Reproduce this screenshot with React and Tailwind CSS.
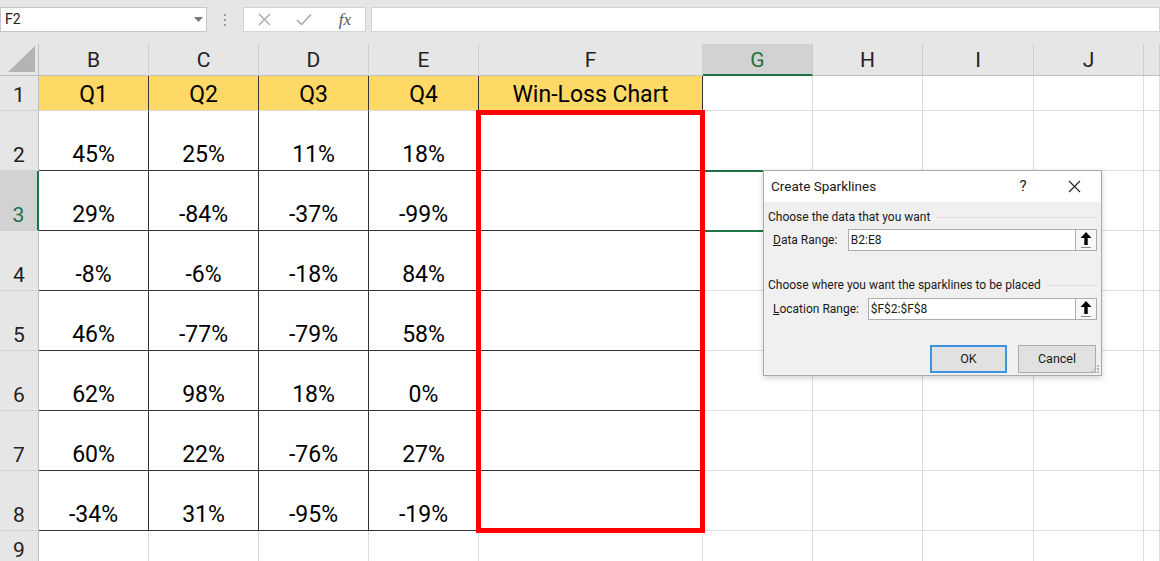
import React from "react";

const COLS = ["B", "C", "D", "E", "F", "G", "H", "I", "J", ""];

const DATA = [
  ["Q1", "Q2", "Q3", "Q4", "Win-Loss Chart"],
  ["45%", "25%", "11%", "18%", ""],
  ["29%", "-84%", "-37%", "-99%", ""],
  ["-8%", "-6%", "-18%", "84%", ""],
  ["46%", "-77%", "-79%", "58%", ""],
  ["62%", "98%", "18%", "0%", ""],
  ["60%", "22%", "-76%", "27%", ""],
  ["-34%", "31%", "-95%", "-19%", ""],
  ["", "", "", "", ""],
];

const UpArrowButton = () => (
  <div className="w-[21px] h-full border-l border-[#adadad] bg-[#f7f7f7] flex items-center justify-center">
    <svg width="16" height="18" viewBox="0 0 16 18">
      <path d="M8 1 L2.5 7 H6.3 V14 H9.7 V7 H13.5 Z" fill="#000" />
      <rect x="3" y="16" width="10" height="1" fill="#8a8a8a" />
    </svg>
  </div>
);

const FormulaBar = () => (
  <div className="h-[44px] bg-[#e6e6e6] flex items-start pt-[7px] font-['Roboto',sans-serif]">
    <div className="w-[207px] h-[25px] bg-white border border-[#c6c6c6] flex items-center justify-between pl-[4px] pr-[3px]">
      <span className="text-[14px] text-[#222]">F2</span>
      <svg width="9" height="5" viewBox="0 0 9 5">
        <path d="M0 0 H9 L4.5 5 Z" fill="#777" />
      </svg>
    </div>
    <div className="w-[36px] h-[25px] flex flex-col items-center justify-center gap-[3px]">
      <span className="w-[2px] h-[2px] bg-[#9a9a9a]"></span>
      <span className="w-[2px] h-[2px] bg-[#9a9a9a]"></span>
      <span className="w-[2px] h-[2px] bg-[#9a9a9a]"></span>
    </div>
    <div className="w-[123px] h-[25px] bg-white border border-[#d4d4d4] flex items-center">
      <span className="w-[41px] flex justify-center">
        <svg width="13" height="13" viewBox="0 0 13 13">
          <path d="M1 1 L12 12 M12 1 L1 12" stroke="#a6a6a6" strokeWidth="1.3" />
        </svg>
      </span>
      <span className="w-[41px] flex justify-center">
        <svg width="16" height="13" viewBox="0 0 16 13">
          <path d="M1 7 L5.5 11.5 L15 1.5" stroke="#a6a6a6" strokeWidth="1.5" fill="none" />
        </svg>
      </span>
      <span className="w-[41px] flex justify-center text-[17px] italic font-['Liberation_Serif',serif] text-[#555] leading-none">
        fx
      </span>
    </div>
    <div className="ml-[5px] flex-1 h-[25px] bg-white border border-[#d4d4d4]"></div>
  </div>
);

const Dialog = () => (
  <div className="absolute left-[763px] top-[126px] w-[339px] h-[206px] border border-[#a9a9a9] bg-[#f0f0f0] shadow-[0_2px_6px_rgba(0,0,0,0.18)] flex flex-col font-['Roboto',sans-serif] text-[#1a1a1a]">
    <div className="h-[31px] bg-white flex items-center pl-[7px]">
      <span className="flex-1 text-[13.5px]">Create Sparklines</span>
      <span className="w-[20px] mr-[18px] text-center text-[15px]">?</span>
      <span className="w-[46px] mr-[4px] flex justify-center">
        <svg width="13" height="13" viewBox="0 0 13 13">
          <path d="M1 1 L12 12 M12 1 L1 12" stroke="#222" strokeWidth="1.1" />
        </svg>
      </span>
    </div>
    <div className="flex-1 flex flex-col px-[4px] pt-[7px] text-[12px] relative">
      <div className="flex items-center gap-[6px] h-[16px]">
        <span>Choose the data that you want</span>
        <span className="flex-1 h-px bg-[#dcdcdc]"></span>
      </div>
      <div className="flex items-center mt-[4px] pl-[5px]">
        <span className="w-[75px]">
          <span className="underline">D</span>ata Range:
        </span>
        <div className="w-[250px] h-[22px] bg-white border border-[#adadad] flex items-center justify-between">
          <span className="pl-[2px]">B2:E8</span>
          <UpArrowButton />
        </div>
      </div>
      <div className="flex items-center gap-[6px] h-[16px] mt-[26px]">
        <span>Choose where you want the sparklines to be placed</span>
        <span className="flex-1 h-px bg-[#dcdcdc]"></span>
      </div>
      <div className="flex items-center mt-[5px] pl-[5px]">
        <span className="w-[95px]">
          <span className="underline">L</span>ocation Range:
        </span>
        <div className="w-[230px] h-[22px] bg-white border border-[#adadad] flex items-center justify-between">
          <span className="pl-[2px]">$F$2:$F$8</span>
          <UpArrowButton />
        </div>
      </div>
      <div className="flex justify-end gap-[11px] mt-[25px] pr-[1px]">
        <button className="w-[77px] h-[28px] bg-[#e1e1e1] border-2 border-[#3c93de] text-[12.5px]">OK</button>
        <button className="w-[78px] h-[28px] bg-[#e1e1e1] border border-[#adadad] text-[12.5px]">Cancel</button>
      </div>
      <svg className="absolute right-[1px] bottom-[1px]" width="10" height="10" viewBox="0 0 10 10">
        <rect x="7" y="1" width="2" height="2" fill="#b5b5b5" />
        <rect x="4" y="4" width="2" height="2" fill="#b5b5b5" />
        <rect x="7" y="4" width="2" height="2" fill="#b5b5b5" />
        <rect x="1" y="7" width="2" height="2" fill="#b5b5b5" />
        <rect x="4" y="7" width="2" height="2" fill="#b5b5b5" />
        <rect x="7" y="7" width="2" height="2" fill="#b5b5b5" />
      </svg>
    </div>
  </div>
);

const cellClass = (r, c) => {
  const inTable = c >= 1 && c <= 5 && r >= 1 && r <= 8;
  const darkBottom = c >= 1 && c <= 5 && r >= 2 && r <= 8;
  return [
    "border-r border-b flex items-end justify-center pb-[4px] leading-none overflow-hidden",
    inTable ? "border-r-[#333]" : "border-r-[#dcdcdc]",
    darkBottom ? "border-b-[#333]" : "border-b-[#dcdcdc]",
    r === 1 && inTable ? "bg-[#ffd966]" : "bg-white",
  ].join(" ");
};

const Sheet = () => (
  <div className="relative">
    <div className="grid grid-cols-[39px_110px_110px_110px_110px_224px_110px_110px_111px_110px_1fr] grid-rows-[32px_35px_repeat(7,60px)_35px] font-['Roboto',sans-serif] text-[23px] text-black">
      {/* corner */}
      <div className="bg-[#e6e6e6] border-r border-b border-[#bfbfbf] flex items-end justify-end pr-[3px] pb-[3px]">
        <svg width="27" height="26" viewBox="0 0 27 26">
          <path d="M27 0 V26 H0 Z" fill="#b4b4b4" />
        </svg>
      </div>
      {COLS.map((col) =>
        col === "G" ? (
          <div
            key={col}
            className="bg-[#d2d2d2] border-r border-r-[#c8c8c8] border-b-2 border-b-[#217346] flex items-center justify-center pt-[3px] text-[21px] text-[#217346]"
          >
            {col}
          </div>
        ) : (
          <div
            key={col || "k"}
            className="bg-[#e6e6e6] border-r border-r-[#cfcfcf] border-b border-b-[#bfbfbf] flex items-center justify-center pt-[3px] text-[21px] text-[#222]"
          >
            {col}
          </div>
        )
      )}
      {DATA.map((row, i) => {
        const r = i + 1;
        return (
          <React.Fragment key={r}>
            {r === 3 ? (
              <div className="bg-[#d2d2d2] border-r-2 border-r-[#217346] border-b border-b-[#d0d0d0] flex items-end justify-center pb-[4px] leading-none text-[21px] text-[#217346]">
                {r}
              </div>
            ) : (
              <div className="bg-[#e6e6e6] border-r border-r-[#bfbfbf] border-b border-b-[#d0d0d0] flex items-end justify-center pb-[4px] leading-none text-[21px] text-[#222]">
                {r}
              </div>
            )}
            {[...row, "", "", "", "", ""].map((v, j) => (
              <div key={j} className={cellClass(r, j + 1)}>
                {v}
              </div>
            ))}
          </React.Fragment>
        );
      })}
    </div>

    {/* active cell G3 */}
    <div className="absolute left-[703px] top-[126px] w-[112px] h-[62px] border-2 border-[#217346]"></div>
    {/* highlighted range F2:F8 */}
    <div className="absolute left-[476px] top-[66px] w-[229px] h-[423px] border-[5px] border-[#ff0000]"></div>

    <Dialog />
  </div>
);

export default function App() {
  return (
    <div className="w-[1160px] h-[561px] overflow-hidden bg-white">
      <FormulaBar />
      <Sheet />
    </div>
  );
}
